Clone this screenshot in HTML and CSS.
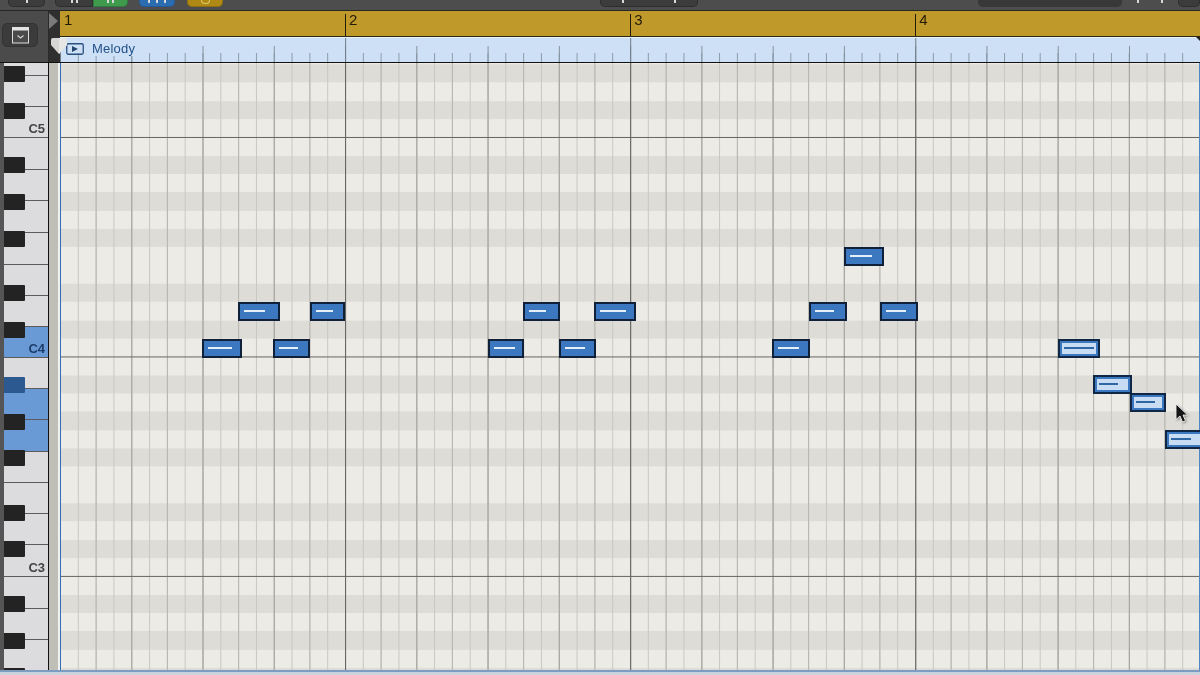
FILE: index.html
```html
<!DOCTYPE html>
<html lang="en">
<head>
    <meta charset="UTF-8">
    <title>Piano Roll</title>
    <link rel="stylesheet" href="styles.css">
</head>
<body>
<div class="app">
    <div class="toolbar">
        <div class="tb-btn tb-one"><i></i></div>
        <div class="tb-btn tb-two"><i></i><i></i></div>
        <div class="tb-btn tb-green"><i></i><i></i></div>
        <div class="tb-btn tb-blue"><i></i><i></i><i></i></div>
        <div class="tb-btn tb-gold"><b></b></div>
        <div class="tb-btn tb-center"><i></i><i></i></div>
        <div class="tb-btn tb-wide"></div>
        <div class="tb-dots"><i></i><i></i></div>
        <div class="tb-btn tb-end"></div>
    </div>

    <div class="editor">
        <div class="side">
            <div class="side-head">
                <div class="side-tools">
                    <div class="view-btn">
                        <svg width="17" height="17" viewBox="0 0 17 17">
                            <rect x="0.5" y="0.5" width="16" height="15.5" fill="#4a4a4a" stroke="#dedede"/>
                            <rect x="0.5" y="0.5" width="16" height="3" fill="#e4e4e4"/>
                            <path d="M5.5 8.5 L8.5 11 L11.5 8.5" fill="none" stroke="#cfcfcf" stroke-width="1.2"/>
                        </svg>
                    </div>
                </div>
                <div class="side-gutter">
                    <svg width="10" height="16" viewBox="0 0 10 16"><path d="M0 0 L9 8 L0 16 Z" fill="#7b7b7b"/></svg>
                </div>
            </div>
            <div class="piano">
                <div class="white-keys">
                    <div class="key key-first"></div>
                    <div class="key"></div>
                    <div class="key"><span>C5</span></div>
                    <div class="key key-wide"></div>
                    <div class="key"></div>
                    <div class="key key-wide"></div>
                    <div class="key key-wide"></div>
                    <div class="key"></div>
                    <div class="key"></div>
                    <div class="key key-on"><span>C4</span></div>
                    <div class="key"></div>
                    <div class="key key-on"></div>
                    <div class="key key-on key-wide"></div>
                    <div class="key"></div>
                    <div class="key"></div>
                    <div class="key"></div>
                    <div class="key key-wide"><span>C3</span></div>
                    <div class="key key-wide"></div>
                    <div class="key"></div>
                    <div class="key"></div>
                </div>
                <div class="black-key" style="top: 3px"></div>
                <div class="black-key" style="top: 40px"></div>
                <div class="black-key" style="top: 94px"></div>
                <div class="black-key" style="top: 131px"></div>
                <div class="black-key" style="top: 168px"></div>
                <div class="black-key" style="top: 222px"></div>
                <div class="black-key" style="top: 259px"></div>
                <div class="black-key black-on" style="top: 314px"></div>
                <div class="black-key" style="top: 351px"></div>
                <div class="black-key" style="top: 387px"></div>
                <div class="black-key" style="top: 442px"></div>
                <div class="black-key" style="top: 478px"></div>
                <div class="black-key" style="top: 533px"></div>
                <div class="black-key" style="top: 570px"></div>
                <div class="black-key" style="top: 605px"></div>
                <div class="strip"></div>
            </div>
        </div>

        <div class="timeline">
            <div class="ruler">
                <div class="bar bar-first">1</div>
                <div class="bar">2</div>
                <div class="bar">3</div>
                <div class="bar">4</div>
            </div>
            <div class="region">
                <svg class="region-icon" width="18" height="12" viewBox="0 0 18 12">
                    <rect x="0.75" y="0.75" width="16.5" height="10.5" rx="1.5" fill="none" stroke="#2b4f7e" stroke-width="1.3"/>
                    <path d="M6 3 L12 6 L6 9 Z" fill="#23476f"/>
                </svg>
                <span class="region-name">Melody</span>
                <div class="region-corner"></div>
            </div>
            <div class="grid">
                <div class="note" style="left: 142px; top: 276px; width: 40px"><i style="width: 24px"></i></div>
                <div class="note" style="left: 213px; top: 276px; width: 37px"><i style="width: 19px"></i></div>
                <div class="note" style="left: 428px; top: 276px; width: 36px"><i style="width: 21px"></i></div>
                <div class="note" style="left: 499px; top: 276px; width: 37px"><i style="width: 20px"></i></div>
                <div class="note" style="left: 712px; top: 276px; width: 38px"><i style="width: 21px"></i></div>

                <div class="note" style="left: 178px; top: 239px; width: 42px"><i style="width: 21px"></i></div>
                <div class="note" style="left: 250px; top: 239px; width: 35px"><i style="width: 17px"></i></div>
                <div class="note" style="left: 463px; top: 239px; width: 37px"><i style="width: 17px"></i></div>
                <div class="note" style="left: 534px; top: 239px; width: 42px"><i style="width: 26px"></i></div>
                <div class="note" style="left: 749px; top: 239px; width: 38px"><i style="width: 19px"></i></div>
                <div class="note" style="left: 820px; top: 239px; width: 38px"><i style="width: 20px"></i></div>

                <div class="note" style="left: 784px; top: 184px; width: 40px"><i style="width: 22px"></i></div>

                <div class="note note-on" style="left: 998px; top: 276px; width: 42px"><i style="width: 30px"></i></div>
                <div class="note note-on" style="left: 1033px; top: 312px; width: 39px"><i style="width: 19px"></i></div>
                <div class="note note-on" style="left: 1070px; top: 330px; width: 36px"><i style="width: 19px"></i></div>
                <div class="note note-on" style="left: 1105px; top: 367px; width: 40px"><i style="width: 20px"></i></div>

                <svg class="cursor" width="14" height="21" viewBox="0 0 14 21">
                    <path d="M1 1 L1 16.5 L5 13 L7.5 19 L10.5 17.8 L8 12 L12.5 12 Z" fill="#151515" stroke="#fff" stroke-width="0.8"/>
                </svg>
            </div>
        </div>

        <svg class="playhead" width="18" height="18" viewBox="0 0 18 18">
            <path d="M1 3 Q1 1 3 1 L15 1 Q17 1 17 3 L17 8 L9 17 L1 8 Z" fill="#d6d6d4"/>
            <path d="M9 1 L15 1 Q17 1 17 3 L17 8 L9 17 Z" fill="#e6e6e4"/>
        </svg>
    </div>

    <div class="statusbar"></div>
</div>
</body>
</html>
```

FILE: styles.css
```css
* {
    box-sizing: border-box;
}

body {
    margin: 0;
    background-color: #4c4c4c;
    font-family: "Liberation Sans", Arial, sans-serif;
}

/* the screenshot is a soft video frame, nothing in it is crisp */
.app {
    display: flex;
    flex-direction: column;
    width: 1200px;
    height: 675px;
    overflow: hidden;
    filter: blur(0.45px);
}

.toolbar {
    display: flex;
    flex: none;
    align-items: flex-start;
    height: 11px;
    background-color: #4d4d4d;
    border-bottom: 1px solid #262622;
}

.tb-btn {
    display: flex;
    justify-content: center;
    gap: 3px;
    height: 7px;
    background-color: #3c3c3c;
    border: 1px solid #2e2e2e;
    border-top: none;
    border-radius: 0 0 5px 5px;
}

.tb-btn i,
.tb-dots i {
    width: 2px;
    height: 3px;
    background-color: #d8d8d8;
}

.tb-btn b {
    width: 9px;
    height: 4px;
    border: 1px solid #e0c870;
    border-top: none;
    border-radius: 0 0 5px 5px;
}

.tb-one { width: 37px; margin-left: 8px; }
.tb-two { width: 38px; margin-left: 10px; border-radius: 0 0 0 5px; }
.tb-green { width: 35px; background-color: #3f9a4d; border-color: #2f7a3c; border-radius: 0 0 5px 0; }
.tb-blue { width: 36px; margin-left: 11px; background-color: #2c6db2; border-color: #245a94; gap: 6px; }
.tb-gold { width: 36px; margin-left: 12px; background-color: #ae8a14; border-color: #8c700f; }
.tb-center { width: 98px; margin-left: 377px; gap: 50px; }
.tb-wide { width: 144px; margin-left: 280px; background-color: #383838; border-color: #383838; }
.tb-dots { display: flex; gap: 22px; width: 56px; padding-left: 15px; }
.tb-end { width: 22px; }

.editor {
    position: relative;
    display: flex;
    flex: 1;
    min-height: 0;
}

.side {
    display: flex;
    flex: none;
    flex-direction: column;
    width: 60px;
}

.side-head {
    display: flex;
    flex: none;
    height: 52px;
    border-bottom: 1px solid #111;
}

.side-tools {
    width: 49px;
    padding: 12px 0 0 2px;
    background-color: #4b4b4b;
    border-right: 1px solid #2a2a2a;
}

.view-btn {
    display: flex;
    align-items: center;
    justify-content: center;
    width: 36px;
    height: 24px;
    background-color: #3b3b3b;
    border: 1px solid #333;
    border-radius: 5px;
}

.side-gutter {
    flex: 1;
    padding-top: 2px;
    background-color: #2f2f2f;
}

.side-gutter svg {
    display: block;
}

.piano {
    position: relative;
    flex: 1;
    overflow: hidden;
    background-color: #555;
}

.white-keys {
    display: flex;
    flex-direction: column;
    width: 49px;
    height: 100%;
    padding-left: 4px;
    border-right: 1px solid #111;
}

.key {
    display: flex;
    flex: none;
    align-items: flex-end;
    justify-content: flex-end;
    height: 31px;
    padding: 0 3px 1px 0;
    background-color: #dcdcde;
    border-bottom: 1px solid #5c5c5c;
}

.key-wide {
    height: 32px;
}

.key-first {
    height: 12.7px;
}

.key span {
    font-size: 13px;
    line-height: 14px;
    font-weight: bold;
    color: #444;
}

.key-on {
    background-color: #6a9ad6;
}

.key-on span {
    color: #1d3d68;
}

.black-key {
    position: absolute;
    left: 4px;
    width: 21px;
    height: 16px;
    background-color: #232323;
    border-radius: 0 1px 1px 0;
}

.black-on {
    background-color: #2c5a90;
}

.strip {
    position: absolute;
    top: 0;
    bottom: 0;
    left: 49px;
    width: 11px;
    background-color: #bfbfb7;
    border-right: 2px solid #f1f1ee;
}

.timeline {
    display: flex;
    flex: 1;
    flex-direction: column;
    min-width: 0;
}

.ruler {
    display: flex;
    flex: none;
    height: 26px;
    background-color: #bf9a2a;
    border-bottom: 1px solid #2e2710;
}

.bar {
    position: relative;
    flex: none;
    width: 285.1px;
    padding: 0 0 0 4px;
    font-size: 15px;
    line-height: 17px;
    color: #221b05;
}

/* the tick of the bar starts a little below the top of the ruler */
.bar::before {
    content: "";
    position: absolute;
    top: 3px;
    bottom: 0;
    left: 0;
    width: 1px;
    background-color: #221c08;
}

.bar-first::before {
    display: none;
}

.region {
    position: relative;
    display: flex;
    flex: none;
    align-items: center;
    height: 26px;
    padding: 0 0 3px 6px;
    background-color: #cde0f5;
    background-image:
        linear-gradient(to right, #6f7c88 1px, transparent 1px),
        linear-gradient(to right, #84919f 1px, transparent 1px),
        linear-gradient(to right, #8c9aa8 1px, transparent 1px);
    background-size: 285.1px 100%, 71.28px 16px, 17.82px 9px;
    background-position: 0 bottom;
    background-repeat: repeat-x;
    border-top: 1px solid #e8f0f8;
    border-bottom: 1px solid #111;
}

.region-icon {
    flex: none;
}

.region-name {
    margin-left: 7px;
    padding: 0 1px;
    font-size: 13px;
    letter-spacing: 0.2px;
    color: #23528a;
    background-color: #cde0f5;
}

.region-corner {
    position: absolute;
    top: -1px;
    right: 0;
    width: 0;
    height: 0;
    border-top: 4px solid #222;
    border-left: 4px solid transparent;
}

.grid {
    --row: 18.29px;
    position: relative;
    flex: 1;
    overflow: hidden;
    background-color: #ecebe6;
    background-image:
        linear-gradient(to right, #5f5f5f 1px, transparent 1px),
        linear-gradient(to top, #66665f 1px, transparent 1px),
        linear-gradient(to right, #a8a8a1 1px, transparent 1px),
        linear-gradient(to right, #b6b6af 1px, transparent 1px),
        linear-gradient(to right, #c8c8c2 1px, transparent 1px),
        linear-gradient(to bottom,
            #dddcd6 0 var(--row),
            transparent var(--row) calc(var(--row) * 2),
            #dddcd6 calc(var(--row) * 2) calc(var(--row) * 3),
            transparent calc(var(--row) * 3) calc(var(--row) * 5),
            #dddcd6 calc(var(--row) * 5) calc(var(--row) * 6),
            transparent calc(var(--row) * 6) calc(var(--row) * 7),
            #dddcd6 calc(var(--row) * 7) calc(var(--row) * 8),
            transparent calc(var(--row) * 8) calc(var(--row) * 9),
            #dddcd6 calc(var(--row) * 9) calc(var(--row) * 10),
            transparent calc(var(--row) * 10) calc(var(--row) * 12));
    background-size:
        285.1px 100%,
        100% 219.48px,
        71.28px 100%,
        35.64px 100%,
        17.82px 100%,
        100% 219.48px;
    background-position:
        0 0,
        0 -144.5px,
        0 0,
        0 0,
        0 0,
        0 1.3px;
    box-shadow: inset 1px 0 #2f6fb5, inset -1px 0 #4f86c4;
}

.note {
    position: absolute;
    display: flex;
    align-items: center;
    height: 19px;
    padding: 0 0 1px 4px;
    background-color: #3c78c0;
    border: 2px solid #0f2038;
}

.note i {
    height: 2px;
    background-color: #e6eff9;
}

.note-on {
    background-color: #c8dcf3;
    border-color: #0f2644;
    box-shadow: inset 0 0 0 2px #3c78c0;
}

.note-on i {
    background-color: #2f66a4;
}

.cursor {
    position: absolute;
    left: 1115px;
    top: 340px;
    filter: drop-shadow(1px 1px 1px rgba(0, 0, 0, 0.35));
}

.playhead {
    position: absolute;
    left: 50px;
    top: 26px;
}

.statusbar {
    flex: none;
    height: 5px;
    background-color: #c9d3dc;
    border-top: 2px solid #7d9cc2;
}
```
